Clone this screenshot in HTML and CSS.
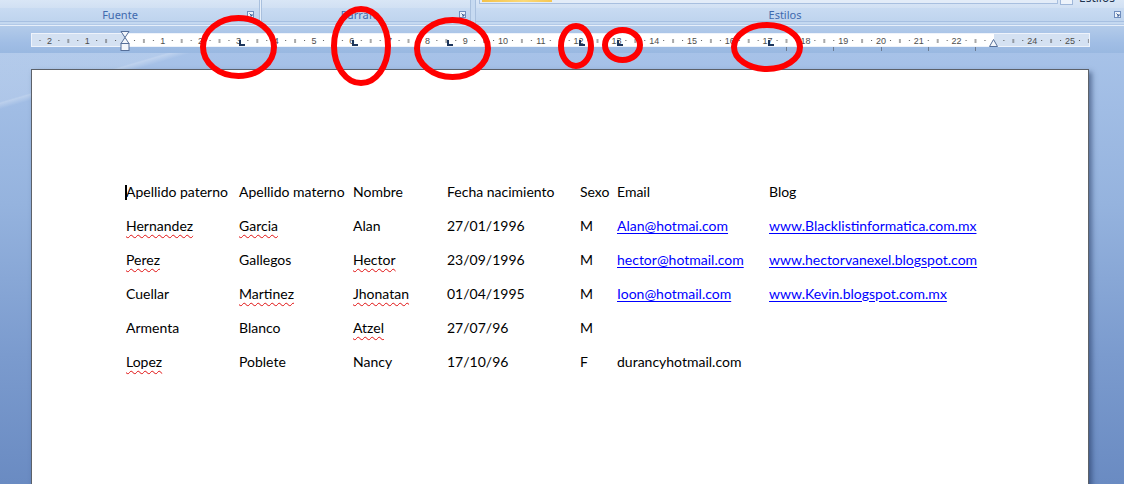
FILE: index.html
```html
<!DOCTYPE html>
<html lang="es">
<head>
<meta charset="utf-8">
<title>Documento - Word</title>
<link rel="stylesheet" href="styles.css">
</head>
<body>
<div class="app">
  <header class="ribbon">
    <div class="group g-fuente">
      <div class="group-top"></div>
      <div class="group-label">
        <span class="label">Fuente</span>
        <span class="launch-wrap"><svg class="launcher" width="7" height="7" viewBox="0 0 7 7"><rect x="0.5" y="0.5" width="6" height="6" fill="#eef3fa" stroke="#6f8dbd"/><path d="M2.5 2.5 L5 5 M5 3 V5 H3" stroke="#3d5f95" fill="none"/></svg></span>
      </div>
    </div>
    <div class="sep"></div>
    <div class="group g-parrafo">
      <div class="group-top"></div>
      <div class="group-label">
        <span class="label">Párrafo</span>
        <span class="launch-wrap"><svg class="launcher" width="7" height="7" viewBox="0 0 7 7"><rect x="0.5" y="0.5" width="6" height="6" fill="#eef3fa" stroke="#6f8dbd"/><path d="M2.5 2.5 L5 5 M5 3 V5 H3" stroke="#3d5f95" fill="none"/></svg></span>
      </div>
    </div>
    <div class="sep sep-wide"></div>
    <div class="group g-estilos">
      <div class="group-top estilos-top">
        <div class="gallery"><span class="gallery-sel"></span></div>
        <span class="more"></span>
        <span class="cut-label">Estilos</span>
      </div>
      <div class="group-label">
        <span class="label">Estilos</span>
        <span class="launch-wrap"><svg class="launcher" width="7" height="7" viewBox="0 0 7 7"><rect x="0.5" y="0.5" width="6" height="6" fill="#eef3fa" stroke="#6f8dbd"/><path d="M2.5 2.5 L5 5 M5 3 V5 H3" stroke="#3d5f95" fill="none"/></svg></span>
      </div>
    </div>
  </header>

  <div class="rulerbar">
    <svg class="ruler" width="1059" height="28" viewBox="0 0 1059 28">
      <defs>
        <pattern id="ticks" patternUnits="userSpaceOnUse" x="94" y="0" width="37.8" height="28">
          <rect x="9" y="15" width="1" height="1" fill="#555"/>
          <rect x="18.4" y="14" width="1" height="4" fill="#555"/>
          <rect x="27.9" y="15" width="1" height="1" fill="#555"/>
        </pattern>
      </defs>
      <rect x="0.5" y="8.5" width="1058" height="13" fill="#d4e1f2" stroke="#eef3fb"/>
      <rect x="94" y="9" width="869" height="12" fill="#ffffff"/>
      <rect x="1" y="9" width="1057" height="12" fill="url(#ticks)"/>
      <g class="nums" text-anchor="middle">
        <text x="18.4" y="18.6">2</text>
        <text x="56.2" y="18.6">1</text>
        <text x="131.8" y="18.6">1</text>
        <text x="169.6" y="18.6">2</text>
        <text x="207.4" y="18.6">3</text>
        <text x="245.2" y="18.6">4</text>
        <text x="283" y="18.6">5</text>
        <text x="320.8" y="18.6">6</text>
        <text x="358.6" y="18.6">7</text>
        <text x="396.4" y="18.6">8</text>
        <text x="434.2" y="18.6">9</text>
        <text x="472" y="18.6">10</text>
        <text x="509.8" y="18.6">11</text>
        <text x="547.6" y="18.6">12</text>
        <text x="585.4" y="18.6">13</text>
        <text x="623.2" y="18.6">14</text>
        <text x="661" y="18.6">15</text>
        <text x="698.8" y="18.6">16</text>
        <text x="736.6" y="18.6">17</text>
        <text x="774.4" y="18.6">18</text>
        <text x="812.2" y="18.6">19</text>
        <text x="850" y="18.6">20</text>
        <text x="887.8" y="18.6">21</text>
        <text x="925.6" y="18.6">22</text>
        <text x="1001.2" y="18.6">24</text>
        <text x="1039" y="18.6">25</text>
      </g>
      <g fill="#1c355c">
        <rect x="208" y="15" width="2" height="6"/><rect x="208" y="19" width="6" height="2"/>
        <rect x="321" y="15" width="2" height="6"/><rect x="321" y="19" width="6" height="2"/>
        <rect x="416" y="15" width="2" height="6"/><rect x="416" y="19" width="6" height="2"/>
        <rect x="548" y="15" width="2" height="6"/><rect x="548" y="19" width="6" height="2"/>
        <rect x="586" y="15" width="2" height="6"/><rect x="586" y="19" width="6" height="2"/>
        <rect x="737" y="15" width="2" height="6"/><rect x="737" y="19" width="6" height="2"/>
      </g>
      <g fill="#6b7b92">
        <rect x="755" y="22" width="1" height="4"/>
        <rect x="802" y="22" width="1" height="4"/>
        <rect x="850" y="22" width="1" height="4"/>
        <rect x="897" y="22" width="1" height="4"/>
        <rect x="944" y="22" width="1" height="4"/>
      </g>
      <g fill="#f3f6fb" stroke="#566f99" stroke-width="1">
        <polygon points="90,6.5 98,6.5 94,12.5"/>
        <polygon points="94,12.5 90,18.5 98,18.5"/>
        <rect x="90" y="18.5" width="8" height="7"/>
        <polygon points="962.5,14.5 958.5,21.5 966.5,21.5"/>
      </g>
    </svg>
  </div>

  <main class="workspace">
    <div class="page">
      <div class="doc">
        <div class="row">
          <span><span class="caret"></span>Apellido paterno</span>
          <span>Apellido materno</span>
          <span>Nombre</span>
          <span>Fecha nacimiento</span>
          <span>Sexo</span>
          <span>Email</span>
          <span>Blog</span>
        </div>
        <div class="row">
          <span><span class="sp">Hernandez</span></span>
          <span><span class="sp">Garcia</span></span>
          <span>Alan</span>
          <span>27/01/1996</span>
          <span>M</span>
          <span><a class="link" href="#">Alan@hotmai.com</a></span>
          <span><a class="link" href="#">www.Blacklistinformatica.com.mx</a></span>
        </div>
        <div class="row">
          <span><span class="sp">Perez</span></span>
          <span>Gallegos</span>
          <span><span class="sp">Hector</span></span>
          <span>23/09/1996</span>
          <span>M</span>
          <span><a class="link" href="#">hector@hotmail.com</a></span>
          <span><a class="link" href="#">www.hectorvanexel.blogspot.com</a></span>
        </div>
        <div class="row">
          <span>Cuellar</span>
          <span><span class="sp">Martinez</span></span>
          <span><span class="sp">Jhonatan</span></span>
          <span>01/04/1995</span>
          <span>M</span>
          <span><a class="link" href="#">Ioon@hotmail.com</a></span>
          <span><a class="link" href="#">www.Kevin.blogspot.com.mx</a></span>
        </div>
        <div class="row">
          <span>Armenta</span>
          <span>Blanco</span>
          <span><span class="sp">Atzel</span></span>
          <span>27/07/96</span>
          <span>M</span>
          <span></span>
          <span></span>
        </div>
        <div class="row">
          <span><span class="sp">Lopez</span></span>
          <span>Poblete</span>
          <span>Nancy</span>
          <span>17/10/96</span>
          <span>F</span>
          <span>durancyhotmail.com</span>
          <span></span>
        </div>
      </div>
    </div>
  </main>

  <svg class="marks" width="1124" height="484" viewBox="0 0 1124 484">
    <g fill="none" stroke="#ff0000" stroke-width="6">
      <ellipse cx="238.5" cy="47" rx="35.5" ry="29"/>
      <ellipse cx="361" cy="46" rx="27" ry="37"/>
      <ellipse cx="452.5" cy="48.5" rx="35.5" ry="28.5"/>
      <ellipse cx="576" cy="46" rx="15" ry="20"/>
      <ellipse cx="622.5" cy="45" rx="17.5" ry="15"/>
      <ellipse cx="767" cy="47" rx="33" ry="22"/>
    </g>
  </svg>
</div>
</body>
</html>
```

FILE: styles.css
```css
* { box-sizing: border-box; }

html, body {
  margin: 0;
  padding: 0;
}

body {
  width: 1124px;
  height: 484px;
  overflow: hidden;
  background: #8eaedc;
  font-family: "Noto Sans", "Liberation Sans", sans-serif;
}

.app {
  position: relative;
  width: 1124px;
  height: 484px;
  overflow: hidden;
}

/* ---------- Ribbon ---------- */
.ribbon {
  display: flex;
  height: 25px;
  background: #c4d8f0;
  border-bottom: 1px solid #b2c9e8;
}

.group {
  display: flex;
  flex-direction: column;
}

.g-fuente { width: 259px; }
.g-parrafo { width: 208px; }
.g-estilos { flex: 1; }

.group-top {
  height: 8px;
  background: linear-gradient(#d9e6f6, #d1e0f3);
}

.group-label {
  display: flex;
  align-items: center;
  height: 14px;
  background: linear-gradient(#c8dbf2, #bfd4ee);
  font-size: 11px;
  line-height: 14px;
  color: #3f6aae;
  border-bottom: 1px solid #a6bfe1;
}

.group-label .label {
  flex: 1;
  text-align: center;
  padding-top: 1px;
}

.launch-wrap {
  display: flex;
  align-items: center;
}

.g-fuente .launch-wrap { width: 19px; padding-left: 7px; }
.g-parrafo .launch-wrap { width: 12px; padding-left: 1px; }
.g-estilos .launch-wrap { width: 30px; padding-left: 20px; }

.launcher { display: block; }

.sep {
  width: 3px;
  background: #e8f0fa;
  border-left: 1px solid #a9c0de;
  border-right: 1px solid #a9c0de;
}

.sep-wide {
  width: 6px;
  background: #c7daf1;
  border-left: 1px solid #a9c0de;
  border-right: 1px solid #a9c0de;
}

.estilos-top {
  display: flex;
  align-items: flex-start;
  padding-left: 3px;
}

.gallery {
  width: 579px;
  height: 4px;
  background: #e3ecf8;
  border: 1px solid #a8bfdf;
  border-top: none;
  padding-left: 2px;
}

.gallery-sel {
  display: block;
  width: 70px;
  height: 2px;
  background: linear-gradient(90deg, #f4c24a, #fbd978 60%, #f6c652);
}

.more {
  width: 13px;
  height: 5px;
  margin-left: 2px;
  background: #edf3fb;
  border: 1px solid #9fb7d9;
  border-top: none;
}

.cut-label {
  margin-left: 6px;
  margin-top: -9px;
  font-size: 12px;
  line-height: 14px;
  color: #1f3450;
}

/* ---------- Ruler ---------- */
.rulerbar {
  height: 28px;
  padding-left: 31px;
  background: linear-gradient(#b3cbea, #a1bee5 60%, #99b8e1);
  border-top: 1px solid #e6eef9;
}

.ruler {
  display: block;
  margin-top: -1px;
}

.nums text {
  font-family: "Liberation Sans", Arial, sans-serif;
  font-size: 9px;
  fill: #4e4e4e;
}

/* ---------- Workspace ---------- */
.workspace {
  height: 431px;
  padding: 16px 0 0 31px;
  overflow: hidden;
  background:
    linear-gradient(163.6deg, rgba(255, 255, 255, 0.14) 0, rgba(255, 255, 255, 0.14) 6.4%, rgba(255, 255, 255, 0.28) 6.6%, rgba(255, 255, 255, 0) 7.4%),
    linear-gradient(#a7c2e8 0, #95b3de 35%, #7b9bce 70%, #6a8bc2 100%);
}

.page {
  width: 1058px;
  height: 500px;
  background: #ffffff;
  border: 1px solid #5c6169;
  box-shadow: 3px 3px 5px rgba(30, 50, 90, 0.55);
}

.doc {
  padding: 104px 0 0 94px;
  font-family: "Lato", "Open Sans", sans-serif;
  font-size: 14px;
  color: #000;
}

.row {
  display: grid;
  grid-template-columns: 113px 114px 94px 133px 37px 152px auto;
  height: 34px;
  align-items: center;
  white-space: nowrap;
}

.caret {
  display: inline-block;
  width: 2px;
  height: 15px;
  margin-right: -1px;
  margin-left: -1px;
  vertical-align: -3px;
  background: #000;
}

.sp {
  text-decoration: underline wavy #e01010;
  text-decoration-thickness: 1px;
  text-underline-offset: 3px;
}

.link {
  color: #0000ff;
  text-decoration: underline;
  text-underline-offset: 2px;
}

/* ---------- Annotation overlay ---------- */
.marks {
  position: absolute;
  top: 0;
  left: 0;
  pointer-events: none;
}
```
